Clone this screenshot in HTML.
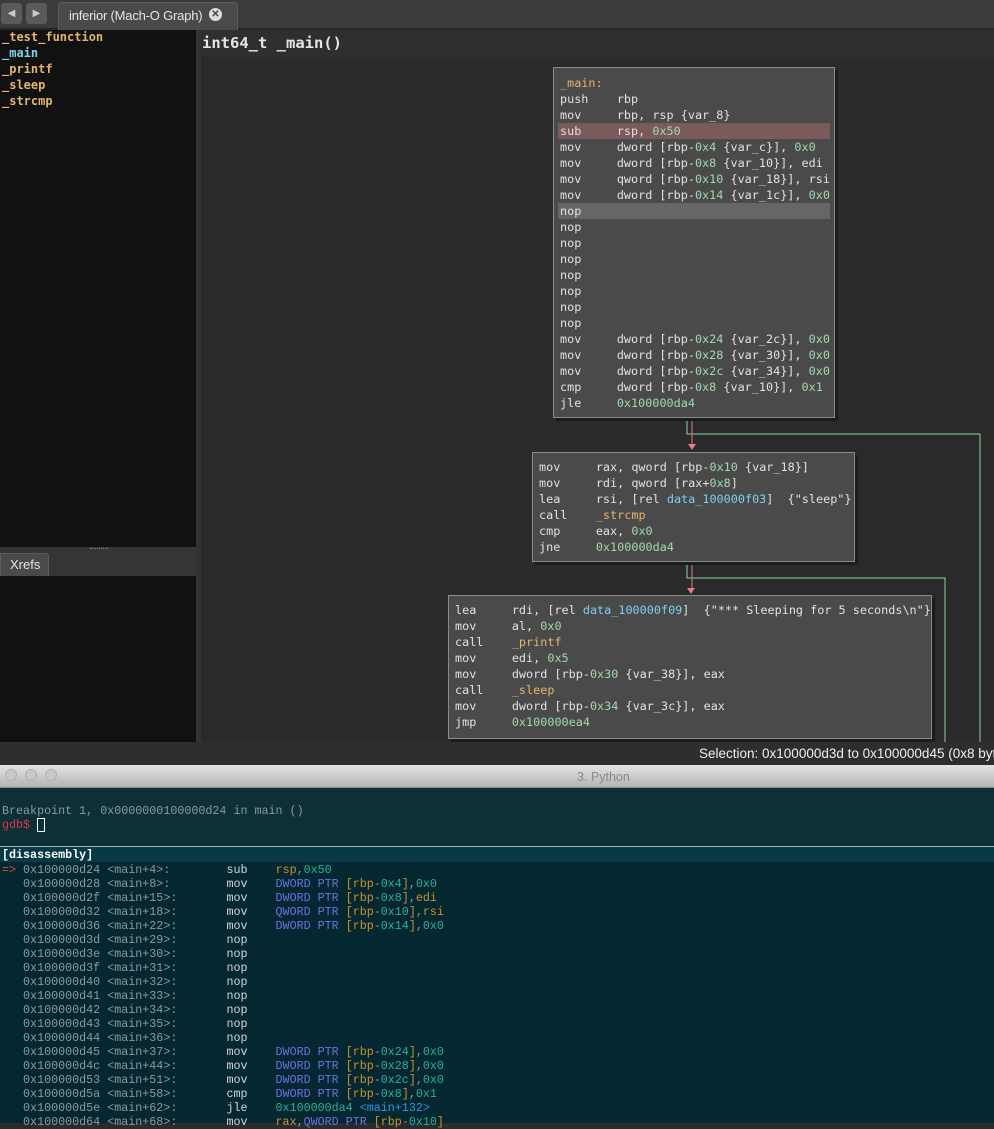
<!DOCTYPE html>
<html><head><meta charset="utf-8"><style>
*{margin:0;padding:0;box-sizing:border-box}
body{width:994px;height:1123px;overflow:hidden;background:#2b2b2b;position:relative;font-family:"Liberation Sans",sans-serif}
.a{position:absolute}
.m{font-family:"DejaVu Sans Mono",monospace;white-space:pre}
.blk{position:absolute;background:#4a4a4a;border:1px solid #8c8c8c;box-shadow:3px 3px 0 #1c1c1c;font-family:"DejaVu Sans Mono",monospace;font-size:11.8px;color:#e2e2e2;white-space:pre;line-height:16px}
.blk div{height:16px;padding-left:6px}
.n{color:#a2d9af}.o{color:#e3b56c}.c{color:#7fd0ec}
.t{font-family:"Liberation Mono",monospace;font-size:11.7px;line-height:14px;white-space:pre;color:#8a9a9c}
.w{color:#d0d8d8}.b{color:#6c71e0}.y{color:#c8952a}.g{color:#26b29a}.r{color:#e0542a}.l{color:#2a9ae0}
</style></head><body>
<!-- tab bar -->
<div class="a" style="left:0;top:0;width:994px;height:29px;background:#3b3b3b;border-bottom:1px solid #222"></div>
<div class="a" style="left:1px;top:3px;width:21px;height:21px;background:#5a5a5a;border-radius:3px;color:#ccc;font-size:10px;text-align:center;line-height:21px">◀</div>
<div class="a" style="left:26px;top:3px;width:21px;height:21px;background:#5a5a5a;border-radius:3px;color:#ccc;font-size:10px;text-align:center;line-height:21px">▶</div>
<div class="a" style="left:58px;top:2px;width:180px;height:28px;background:#4a4a4a;border:1px solid #5c5c5c;border-bottom:none;border-radius:3px 3px 0 0;color:#e6e6e6;font-size:13px;line-height:26px;padding-left:10px;letter-spacing:-0.2px">inferior (Mach-O Graph)</div>
<div class="a" style="left:209px;top:8px;width:13px;height:13px;border-radius:50%;background:#ddd;color:#444;font-size:10px;font-weight:bold;text-align:center;line-height:13px">✕</div>
<!-- left panel -->
<div class="a" style="left:0;top:30px;width:196px;height:517px;background:#111"></div>
<div class="a m" style="left:2px;top:29px;font-size:12px;line-height:16px;font-weight:bold;color:#e3b56c">_test_function
<span style="color:#7fd0ec">_main</span>
_printf
_sleep
_strcmp</div>
<div class="a" style="left:0;top:547px;width:196px;height:30px;background:#353535"></div>
<div class="a" style="left:90px;top:548px;width:18px;height:2px;border-top:1px dotted #888"></div>
<div class="a" style="left:0;top:553px;width:49px;height:24px;background:#4a4a4a;border:1px solid #5c5c5c;border-bottom:none;border-radius:0 3px 0 0;color:#e6e6e6;font-size:13px;line-height:22px;padding-left:9px">Xrefs</div>
<div class="a" style="left:0;top:576px;width:196px;height:166px;background:#111"></div>
<div class="a" style="left:196px;top:30px;width:5px;height:712px;background:#333"></div>
<!-- header -->
<div class="a" style="left:201px;top:30px;width:793px;height:27px;background:#2f2f2f"></div>
<div class="a m" style="left:202px;top:32px;font-size:15.5px;color:#e6e6e6;line-height:22px;font-weight:bold">int64_t _main()</div>
<div class="a" style="left:201px;top:57px;width:793px;height:685px;background:#2a2a2a"></div>
<!-- edges -->
<svg class="a" style="left:0;top:0" width="994" height="745">
<g fill="none" stroke-width="1">
<path d="M687 417V434H980V742" stroke="#86d49a"/>
<path d="M692 417V446" stroke="#e77a86"/>
<path d="M687 561V578H945V742" stroke="#86d49a"/>
<path d="M692 561V589" stroke="#e77a86"/>
<path d="M693 738V742" stroke="#2a9ae0"/>
</g>
<path d="M688 444h8l-4 6z" fill="#e77a86"/>
<path d="M687 588h8l-4 6z" fill="#e77a86"/>
</svg>
<!-- block 1 -->
<div class="blk" style="left:553px;top:67px;width:282px;height:351px;padding-top:7px"><div class="o">_main:</div><div>push    rbp</div><div>mov     rbp, rsp {var_8}</div><div style="background:#7a5a5a;margin:0 4px;padding-left:2px">sub     rsp, <span class="n">0x50</span></div><div>mov     dword [rbp-<span class="n">0x4</span> {var_c}], <span class="n">0x0</span></div><div>mov     dword [rbp-<span class="n">0x8</span> {var_10}], edi</div><div>mov     qword [rbp-<span class="n">0x10</span> {var_18}], rsi</div><div>mov     dword [rbp-<span class="n">0x14</span> {var_1c}], <span class="n">0x0</span></div><div style="background:#666;margin:0 4px;padding-left:2px">nop</div><div>nop</div><div>nop</div><div>nop</div><div>nop</div><div>nop</div><div>nop</div><div>nop</div><div>mov     dword [rbp-<span class="n">0x24</span> {var_2c}], <span class="n">0x0</span></div><div>mov     dword [rbp-<span class="n">0x28</span> {var_30}], <span class="n">0x0</span></div><div>mov     dword [rbp-<span class="n">0x2c</span> {var_34}], <span class="n">0x0</span></div><div>cmp     dword [rbp-<span class="n">0x8</span> {var_10}], <span class="n">0x1</span></div><div>jle     <span class="n">0x100000da4</span></div></div>
<!-- block 2 -->
<div class="blk" style="left:532px;top:452px;width:323px;height:110px;padding-top:6px"><div>mov     rax, qword [rbp-<span class="n">0x10</span> {var_18}]</div><div>mov     rdi, qword [rax+<span class="n">0x8</span>]</div><div>lea     rsi, [rel <span class="c">data_100000f03</span>]  {"sleep"}</div><div>call    <span class="o">_strcmp</span></div><div>cmp     eax, <span class="n">0x0</span></div><div>jne     <span class="n">0x100000da4</span></div></div>
<!-- block 3 -->
<div class="blk" style="left:448px;top:595px;width:484px;height:144px;padding-top:6px"><div>lea     rdi, [rel <span class="c">data_100000f09</span>]  {"*** Sleeping for 5 seconds\n"}</div><div>mov     al, <span class="n">0x0</span></div><div>call    <span class="o">_printf</span></div><div>mov     edi, <span class="n">0x5</span></div><div>mov     dword [rbp-<span class="n">0x30</span> {var_38}], eax</div><div>call    <span class="o">_sleep</span></div><div>mov     dword [rbp-<span class="n">0x34</span> {var_3c}], eax</div><div>jmp     <span class="n">0x100000ea4</span></div></div>
<!-- status -->
<div class="a" style="left:0;top:742px;width:994px;height:23px;background:#2e2e2e"></div>
<div class="a" style="left:699px;top:744px;font-size:13.5px;color:#f0f0f0;line-height:20px;white-space:nowrap">Selection: 0x100000d3d to 0x100000d45 (0x8 bytes)</div>
<!-- terminal title -->
<div class="a" style="left:0;top:765px;width:994px;height:23px;background:linear-gradient(#e4e4e4,#b4b4b4);border-bottom:1px solid #888"></div>
<div class="a" style="left:5px;top:769px;width:12px;height:12px;border-radius:50%;background:#c8c8c8;border:1px solid #b0b0b0"></div>
<div class="a" style="left:25px;top:769px;width:12px;height:12px;border-radius:50%;background:#c8c8c8;border:1px solid #b0b0b0"></div>
<div class="a" style="left:45px;top:769px;width:12px;height:12px;border-radius:50%;background:#c8c8c8;border:1px solid #b0b0b0"></div>
<div class="a" style="left:577px;top:768px;font-size:12.5px;color:#888;line-height:18px">3. Python</div>
<!-- terminal -->
<div class="a" style="left:0;top:788px;width:994px;height:58px;background:#0c2f38"></div>
<div class="a" style="left:0;top:846px;width:994px;height:1px;background:#a8b4b6"></div>
<div class="a" style="left:0;top:847px;width:994px;height:15px;background:#083a44"></div>
<div class="a" style="left:0;top:862px;width:994px;height:261px;background:#052731"></div>
<div class="a t" style="left:2px;top:804px">Breakpoint 1, 0x0000000100000d24 in main ()
<span style="color:#dc3545">gdb$</span> </div>
<div class="a" style="left:37px;top:818px;width:8px;height:14px;border:1px solid #fff"></div>
<div class="a t" style="left:2px;top:848px;color:#fff;font-weight:bold">[disassembly]</div>
<div class="a t" style="left:2px;top:863px"><span class="r">=&gt;</span> 0x100000d24 &lt;main+4&gt;:        <span class="w">sub</span>    <span class="y">rsp</span>,<span class="g">0x50</span>
   0x100000d28 &lt;main+8&gt;:        <span class="w">mov</span>    <span class="b">DWORD PTR</span> <span class="y">[rbp</span>-<span class="g">0x4</span><span class="y">]</span>,<span class="g">0x0</span>
   0x100000d2f &lt;main+15&gt;:       <span class="w">mov</span>    <span class="b">DWORD PTR</span> <span class="y">[rbp</span>-<span class="g">0x8</span><span class="y">]</span>,<span class="y">edi</span>
   0x100000d32 &lt;main+18&gt;:       <span class="w">mov</span>    <span class="b">QWORD PTR</span> <span class="y">[rbp</span>-<span class="g">0x10</span><span class="y">]</span>,<span class="y">rsi</span>
   0x100000d36 &lt;main+22&gt;:       <span class="w">mov</span>    <span class="b">DWORD PTR</span> <span class="y">[rbp</span>-<span class="g">0x14</span><span class="y">]</span>,<span class="g">0x0</span>
   0x100000d3d &lt;main+29&gt;:       <span class="w">nop</span>
   0x100000d3e &lt;main+30&gt;:       <span class="w">nop</span>
   0x100000d3f &lt;main+31&gt;:       <span class="w">nop</span>
   0x100000d40 &lt;main+32&gt;:       <span class="w">nop</span>
   0x100000d41 &lt;main+33&gt;:       <span class="w">nop</span>
   0x100000d42 &lt;main+34&gt;:       <span class="w">nop</span>
   0x100000d43 &lt;main+35&gt;:       <span class="w">nop</span>
   0x100000d44 &lt;main+36&gt;:       <span class="w">nop</span>
   0x100000d45 &lt;main+37&gt;:       <span class="w">mov</span>    <span class="b">DWORD PTR</span> <span class="y">[rbp</span>-<span class="g">0x24</span><span class="y">]</span>,<span class="g">0x0</span>
   0x100000d4c &lt;main+44&gt;:       <span class="w">mov</span>    <span class="b">DWORD PTR</span> <span class="y">[rbp</span>-<span class="g">0x28</span><span class="y">]</span>,<span class="g">0x0</span>
   0x100000d53 &lt;main+51&gt;:       <span class="w">mov</span>    <span class="b">DWORD PTR</span> <span class="y">[rbp</span>-<span class="g">0x2c</span><span class="y">]</span>,<span class="g">0x0</span>
   0x100000d5a &lt;main+58&gt;:       <span class="w">cmp</span>    <span class="b">DWORD PTR</span> <span class="y">[rbp</span>-<span class="g">0x8</span><span class="y">]</span>,<span class="g">0x1</span>
   0x100000d5e &lt;main+62&gt;:       <span class="w">jle</span>    <span class="g">0x100000da4</span> <span class="l">&lt;main+132&gt;</span>
   0x100000d64 &lt;main+68&gt;:       <span class="w">mov</span>    <span class="y">rax</span>,<span class="b">QWORD PTR</span> <span class="y">[rbp</span>-<span class="g">0x10</span><span class="y">]</span></div>
</body></html>
